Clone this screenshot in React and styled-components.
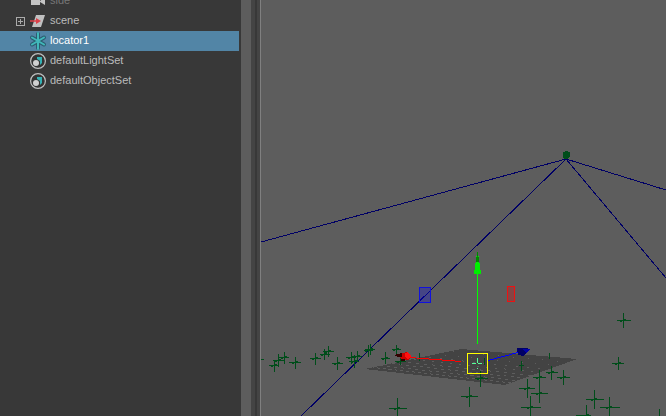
import React from 'react';
import styled, { createGlobalStyle } from 'styled-components';

// [x, y, left, right, up, down]
const locators = [
  [262, 359, 1, 1, 0, 0],
  [274, 365, 5, 4, 4, 6],
  [278, 360, 5, 6, 6, 6],
  [284, 357, 5, 4, 5, 6],
  [295, 362, 6, 5, 5, 6],
  [315, 358, 5, 5, 5, 6],
  [324, 354, 4, 5, 5, 5],
  [328, 351, 5, 5, 5, 5],
  [337, 363, 5, 5, 6, 6],
  [351, 357, 5, 4, 5, 6],
  [354, 361, 5, 4, 6, 6],
  [357, 356, 5, 4, 5, 5],
  [368, 350, 4, 4, 5, 6],
  [370, 349, 5, 4, 5, 5],
  [385, 358, 4, 4, 6, 5],
  [396, 349, 4, 4, 4, 4],
  [400, 361, 5, 5, 5, 3],
  [419, 356, 0, 0, 3, 4],
  [397, 408, 8, 9, 10, 10],
  [469, 396, 8, 8, 9, 10],
  [480, 378, 5, 7, 7, 8],
  [484, 361, 0, 0, 3, 3],
  [521, 365, 2, 2, 4, 5],
  [549, 355, 0, 0, 2, 3],
  [551, 372, 5, 6, 6, 7],
  [563, 377, 6, 6, 7, 7],
  [539, 377, 6, 6, 7, 7],
  [527, 388, 8, 7, 9, 9],
  [539, 393, 8, 8, 9, 9],
  [530, 407, 9, 10, 11, 10],
  [623, 320, 6, 7, 7, 7],
  [618, 363, 6, 5, 6, 6],
  [594, 399, 8, 9, 9, 9],
  [609, 407, 9, 10, 10, 10],
  [586, 415, 10, 4, 10, 1],
  [659, 419, 0, 0, 10, 0],
];

// ground plane corners
const west = [365, 369];
const north = [461, 349];
const east = [577, 359];
const south = [505, 385];

const mix = (a, b, t) => [a[0] + (b[0] - a[0]) * t, a[1] + (b[1] - a[1]) * t];

// gaps between the grid lines, sparser towards the far edge
const gaps = [
  { t: 0.08, dash: '3 3' },
  { t: 0.17, dash: '3 4' },
  { t: 0.27, dash: '3 4' },
  { t: 0.37, dash: '3 5' },
  { t: 0.48, dash: '2 7' },
  { t: 0.6, dash: '2 9' },
  { t: 0.74, dash: '1 12' },
  { t: 0.88, dash: '1 14' },
];

const CameraIcon = () => (
  <svg width="18" height="18" viewBox="0 0 18 18">
    <path d="M2 3H11V13H2ZM11 9L16 5V13L11 10Z" fill="#c4c4c4" />
  </svg>
);

const TransformIcon = () => (
  <svg width="18" height="18" viewBox="0 0 18 18">
    <path d="M7 3H16L12 15H3Z" fill="#c0c0c0" />
    <path d="M1 9H8" stroke="#dc4048" strokeWidth="1.5" />
    <path d="M7 6L12 9L7 12Z" fill="#dc4048" />
  </svg>
);

const LocatorIcon = () => (
  <svg width="18" height="18" viewBox="0 0 18 18" strokeLinecap="round">
    <path d="M9 2V16M3 5.5L15 12.5M15 5.5L3 12.5" stroke="#2b5d70" strokeWidth="4" />
    <path d="M9 1V17M3 5.5L15 12.5M15 5.5L3 12.5" stroke="#41b8ba" strokeWidth="2" />
  </svg>
);

const SetIcon = () => (
  <svg width="18" height="18" viewBox="0 0 18 18">
    <circle cx="9" cy="9" r="7.4" fill="#333" stroke="#c0c0c0" strokeWidth="1.2" />
    <path d="M8 5H13V11L11 13V9L8 7Z" fill="#35b1b3" />
    <circle cx="7" cy="11" r="3" fill="#d0d0d0" />
  </svg>
);

const ExpandIcon = () => (
  <svg width="9" height="9" viewBox="0 0 9 9" shapeRendering="crispEdges">
    <path d="M0.5 0.5H8.5V8.5H0.5ZM2 4.5H7M4.5 2V7" fill="none" stroke="#aaa" />
  </svg>
);

const nodes = [
  { name: 'side', icon: <CameraIcon />, dim: true },
  { name: 'scene', icon: <TransformIcon />, expandable: true },
  { name: 'locator1', icon: <LocatorIcon />, selected: true },
  { name: 'defaultLightSet', icon: <SetIcon /> },
  { name: 'defaultObjectSet', icon: <SetIcon /> },
];

const Locator = ({ at }) => {
  const [x, y, left, right, up, down] = at;
  const tilt = left > 3 ? `M${x - 3} ${y + 2}L${x + 3} ${y - 1}` : '';
  return (
    <path
      d={`M${x + 0.5} ${y - up}V${y + down + 1}M${x - left} ${y + 0.5}L${x} ${y + 0.5}L${x + right + 1} ${y + 1}${tilt}`}
    />
  );
};

const Scene = () => (
  <Canvas role="img" aria-label="Perspective view" shapeRendering="crispEdges">
    <g transform="translate(-261 0)" fill="none">
      <path d={`M${west}L${north}L${east}L${south}Z`} fill="#434343" />
      <g stroke="#5d5d5d">
        {gaps.map(({ t, dash }, i) => (
          <path
            key={t}
            d={`M${mix(south, east, t)}L${mix(west, north, t)}`}
            strokeDasharray={dash}
            strokeDashoffset={i * 5}
          />
        ))}
      </g>
      <path d="M261 242L566 159L666 190M301 416L566 159L666 278" stroke="#000066" />
      <g stroke="#004d1a">
        {locators.map((at) => (
          <Locator key={at.join()} at={at} />
        ))}
      </g>
      <path d="M563 152H565V151H568V152H570V156L568 159H564L563 156Z" fill="#004d1a" />
      <path d="M419.5 287.5H430.5V302.5H419.5Z" fill="#0000ff" fillOpacity="0.25" stroke="#1111dd" />
      <path d="M507.5 286.5H514.5V301.5H507.5Z" fill="#ff0000" fillOpacity="0.25" stroke="#ee1111" />
      <path d="M477.5 272V344" stroke="#00ff00" />
      <path d="M477 252H478L481 274H474Z" fill="#00ee00" />
      <path d="M477 252H478L479 262H476Z" fill="#008800" />
      <path d="M410 357.5L461 361.5" stroke="#ff0000" />
      <path d="M394 355L402 353L408 352L411 356L409 360L402 360L400 357Z" fill="#cc0000" />
      <path d="M394 355L402 353V357L398 357ZM401 359H405V361H401Z" fill="#330000" />
      <path d="M405 353L408 352L411 356L408 359L405 357Z" fill="#ff1010" />
      <path d="M488 360.5L518 352.5" stroke="#0000ff" />
      <path d="M517 348H525L530 349L526 353L523 356L518 355Z" fill="#000066" />
      <path d="M523 349H530L526 353Z" fill="#0000aa" />
      <path d="M472 363.5H476M478 363.5H482M477.5 358V363M477.5 368V369" stroke="#55ff99" />
      <path d="M467.5 353.5H487.5V373.5H467.5Z" stroke="#ffff00" />
    </g>
  </Canvas>
);

const App = () => {
  return (
    <Workspace>
      <GlobalStyle />
      <Outliner>
        <NodeList>
          {nodes.map((node) => (
            <NodeRow key={node.name} $selected={node.selected} $dim={node.dim}>
              <Toggle>
                {node.expandable && (
                  <ExpandButton aria-label="Expand scene">
                    <ExpandIcon />
                  </ExpandButton>
                )}
              </Toggle>
              {node.icon}
              <NodeName>{node.name}</NodeName>
            </NodeRow>
          ))}
        </NodeList>
      </Outliner>
      <ScrollTrack />
      <Splitter />
      <Viewport>
        <Scene />
      </Viewport>
    </Workspace>
  );
};

export default App;

const GlobalStyle = createGlobalStyle`
  * {
    box-sizing: border-box;
  }

  body {
    margin: 0;
    background: #383838;
    font-family: 'Liberation Sans', Arial, sans-serif;
  }
`;
const Workspace = styled.main`
  display: flex;
  height: 100vh;
  overflow: hidden;
`;
const Outliner = styled.nav`
  flex: 0 0 241px;
  padding-right: 2px;
  background: #383838;
  overflow: hidden;
`;
const NodeList = styled.ul`
  margin: -9px 0 0;
  padding: 0;
  list-style: none;
`;
const NodeRow = styled.li`
  display: flex;
  align-items: center;
  height: 20px;
  padding-left: 16px;
  background: ${({ $selected }) => ($selected ? '#5285a6' : 'transparent')};
  color: ${({ $selected, $dim }) => ($selected ? '#fff' : $dim ? '#777' : '#bbb')};
`;
const Toggle = styled.span`
  display: flex;
  flex: 0 0 13px;
`;
const ExpandButton = styled.button`
  display: flex;
  padding: 0;
  border: 0;
  background: none;
`;
const NodeName = styled.span`
  margin-left: 3px;
  padding-bottom: 2px;
  font-size: 11px;
  line-height: 18px;
`;
const ScrollTrack = styled.div`
  flex: 0 0 10px;
  background: #5d5d5d;
`;
const Splitter = styled.div`
  flex: 0 0 9px;
  border: solid #444;
  border-width: 0 3px 0 4px;
  background: #383838;
`;
const Viewport = styled.section`
  flex: 1;
  min-width: 0;
  border-left: 1px solid #808080;
  background: #5d5d5d;
`;
const Canvas = styled.svg`
  display: block;
  width: 100%;
  height: 100%;
`;
